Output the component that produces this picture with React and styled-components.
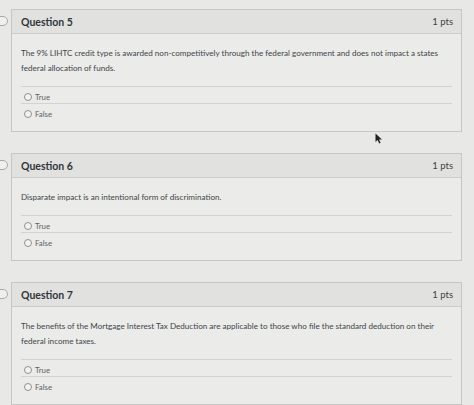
import React from 'react';
import styled, { createGlobalStyle } from 'styled-components';

const GlobalStyle = createGlobalStyle`
  html, body {
    margin: 0;
    padding: 0;
    background: #e8e8e6;
    font-family: Lato, "Open Sans", "Liberation Sans", sans-serif;
  }
`;

const Page = styled.div`
  position: relative;
  width: 474px;
  height: 405px;
  overflow: hidden;
  padding-top: 9px;
  box-sizing: border-box;
`;

const Card = styled.section`
  position: relative;
  margin: 0 12px 21px 11px;
  border: 1px solid #c6c6c4;
  background: #ebebe9;
`;

const Flag = styled.span`
  position: absolute;
  left: -16px;
  top: 6px;
  width: 10px;
  height: 8px;
  border: 1px solid #a9a9a7;
  border-radius: 0 5px 5px 0;
  background: #efefed;
`;

const Header = styled.header`
  display: flex;
  align-items: center;
  justify-content: space-between;
  height: 23px;
  padding: 0 8px 0 9px;
  background: #e1e1df;
  border-bottom: 1px solid #cbcbc9;
`;

const Title = styled.h2`
  margin: 0;
  font-size: 10.5px;
  font-weight: 700;
  color: #30363b;
`;

const Points = styled.span`
  font-size: 9.5px;
  color: #3d4348;
`;

const Body = styled.div`
  padding: 12px 9px 11px;
`;

const Prompt = styled.p`
  margin: 0 0 10px;
  font-size: 8.1px;
  line-height: 15px;
  color: #40464b;
`;

const Answer = styled.label`
  display: flex;
  align-items: center;
  gap: 3px;
  height: 11px;
  padding: 4px 0 1px 3px;
  border-top: 1px solid #d3d3d1;
  font-size: 7.8px;
  color: #5c6267;
`;

const Radio = styled.span`
  width: 6px;
  height: 6px;
  border: 1px solid #8d9196;
  border-radius: 50%;
  background: #f3f3f1;
`;

const Cursor = styled.svg`
  position: absolute;
  left: 375px;
  top: 133px;
`;

const questions = [
  {
    n: 5,
    text: 'The 9% LIHTC credit type is awarded non-competitively through the federal government and does not impact a states federal allocation of funds.',
  },
  {
    n: 6,
    text: 'Disparate impact is an intentional form of discrimination.',
  },
  {
    n: 7,
    text: 'The benefits of the Mortgage Interest Tax Deduction are applicable to those who file the standard deduction on their federal income taxes.',
  },
];

function Question({ n, text }) {
  return (
    <Card>
      <Flag />
      <Header>
        <Title>Question {n}</Title>
        <Points>1 pts</Points>
      </Header>
      <Body>
        <Prompt>{text}</Prompt>
        <Answer>
          <Radio />
          True
        </Answer>
        <Answer>
          <Radio />
          False
        </Answer>
      </Body>
    </Card>
  );
}

export default function App() {
  return (
    <Page>
      <GlobalStyle />
      {questions.map(q => (
        <Question key={q.n} {...q} />
      ))}
      <Cursor width="8" height="11" viewBox="0 0 8 11">
        <path d="M0.5 0.5 L0.5 9 L2.6 7 L4.2 10.5 L5.6 9.8 L4 6.5 L7 6.5 Z" fill="#222" />
      </Cursor>
    </Page>
  );
}
